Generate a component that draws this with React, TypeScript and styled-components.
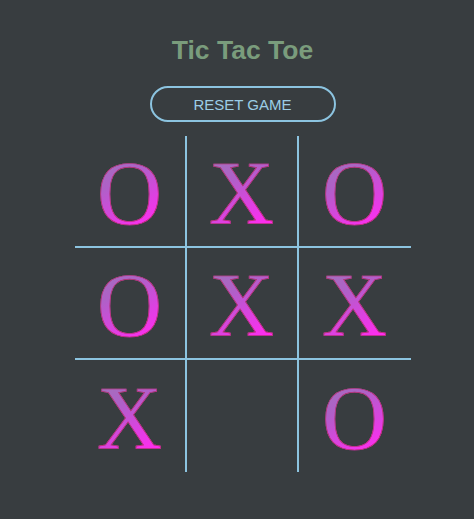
import React, { useState } from 'react'
import styled, { createGlobalStyle } from 'styled-components'

const GlobalStyle = createGlobalStyle`
  html, body {
    margin: 0;
    padding: 0;
    background: #383d40;
  }
`

const Page = styled.main`
  display: flex;
  flex-direction: column;
  align-items: center;
  padding: 33px 0 0 11px;
  min-height: 519px;
  box-sizing: border-box;
  font-family: 'Liberation Sans', Arial, sans-serif;
`

const Title = styled.h1`
  margin: 0;
  font-size: 26.5px;
  font-weight: 700;
  line-height: 34px;
  color: #7a9c7c;
`

const ResetButton = styled.button`
  margin-top: 19px;
  width: 186px;
  height: 36px;
  border: 2px solid #8cc4e0;
  border-radius: 18px;
  background: transparent;
  color: #9ccde6;
  font-family: 'Liberation Sans', Arial, sans-serif;
  font-size: 15px;
  cursor: pointer;
`

const Board = styled.div`
  margin-top: 14px;
  display: grid;
  grid-template-columns: repeat(3, 112px);
  grid-template-rows: repeat(3, 112px);
`

const Cell = styled.div<{ $right: boolean; $bottom: boolean }>`
  display: flex;
  align-items: center;
  justify-content: center;
  border-right: ${(p) => (p.$right ? '2px solid #8cc4e0' : 'none')};
  border-bottom: ${(p) => (p.$bottom ? '2px solid #8cc4e0' : 'none')};
  cursor: pointer;
`

const Mark = styled.span`
  font-family: 'Liberation Serif', 'Times New Roman', serif;
  font-size: 90px;
  line-height: 1;
  background: linear-gradient(150deg, #9c78b6 0%, #b060c8 35%, #e23ee4 65%, #ff2cf0 85%, #c84aa8 100%);
  -webkit-background-clip: text;
  background-clip: text;
  color: transparent;
  -webkit-text-stroke: 0.7px #b82c6c;
  transform: translateY(3px);
`

const initial = ['O', 'X', 'O', 'O', 'X', 'X', 'X', '', 'O']

export default function App() {
  const [cells, setCells] = useState<string[]>(initial)

  return (
    <Page>
      <GlobalStyle />
      <Title>Tic Tac Toe</Title>
      <ResetButton type="button" onClick={() => setCells(Array(9).fill(''))}>
        RESET GAME
      </ResetButton>
      <Board>
        {cells.map((v, i) => (
          <Cell key={i} $right={i % 3 !== 2} $bottom={i < 6}>
            {v && <Mark>{v}</Mark>}
          </Cell>
        ))}
      </Board>
    </Page>
  )
}
